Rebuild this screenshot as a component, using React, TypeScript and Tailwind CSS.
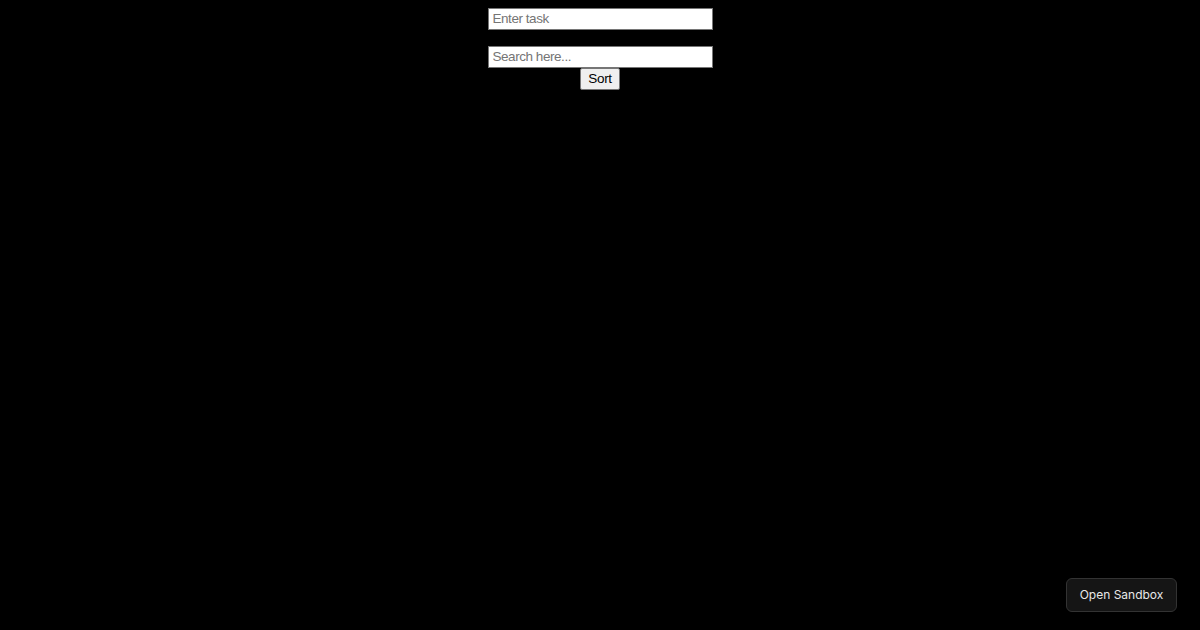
export default function App() {
  const field =
    "h-[22px] w-[225px] border border-[#767676] bg-white pl-[4px] pr-[3px] pb-[2px] text-[13.5px] tracking-[-0.45px] text-black placeholder:text-[#757575] outline-none";

  return (
    <div className="relative h-[630px] w-full bg-black font-['Liberation_Sans',Arial,sans-serif]">
      <div className="flex flex-col items-center pt-2">
        <input type="text" placeholder="Enter task" className={field} />
        <input type="text" placeholder="Search here..." className={`mt-4 ${field}`} />
        <button className="h-[22px] w-[40px] rounded-[2px] border border-[#767676] bg-[#efefef] pb-[1px] text-[13.5px] tracking-[-0.3px] text-black">
          Sort
        </button>
      </div>
      <button className="absolute bottom-[18px] right-[23px] h-[34px] w-[111px] rounded-md border border-[#333] bg-[#151515] font-['Inter',sans-serif] text-[12px] text-[#e8e8e8]">
        Open Sandbox
      </button>
    </div>
  );
}
